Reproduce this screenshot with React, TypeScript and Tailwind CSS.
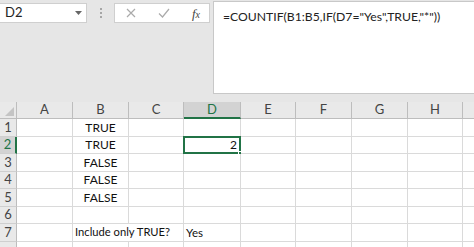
import React from 'react';

const cols = ['A', 'B', 'C', 'D', 'E', 'F', 'G', 'H', ''];
const rowHeights = ['h-[18px]', 'h-[17px]', 'h-[18px]', 'h-[17px]', 'h-[18px]', 'h-[17px]', 'h-[18px]', 'h-[17px]'];

const cells: Record<string, { text: string; align: 'left' | 'center' | 'right'; size: string }> = {
  'B1': { text: 'TRUE', align: 'center', size: 'text-[12px]' },
  'B2': { text: 'TRUE', align: 'center', size: 'text-[12px]' },
  'B3': { text: 'FALSE', align: 'center', size: 'text-[12px]' },
  'B4': { text: 'FALSE', align: 'center', size: 'text-[12px]' },
  'B5': { text: 'FALSE', align: 'center', size: 'text-[12px]' },
  'B7': { text: 'Include only TRUE?', align: 'left', size: 'text-[11.2px]' },
  'D2': { text: '2', align: 'right', size: 'text-[12px]' },
  'D7': { text: 'Yes', align: 'left', size: 'text-[11.5px]' },
};

function Cell({ id, row }: { id: string; row: number }) {
  const c = cells[id];
  const selected = id === 'D2';
  // text in B7 runs over into C7, so no line there
  const noRight = id === 'B7';
  return (
    <div
      className={`relative border-b border-[#dadada] ${rowHeights[row - 1]} bg-white ${
        noRight ? 'z-10' : 'border-r'
      }`}
    >
      {c && (
        <span
          className={`absolute top-0 bottom-0 flex items-center whitespace-nowrap ${c.size} text-[#111] ${
            c.align === 'center' ? 'left-0 right-0 justify-center' : c.align === 'right' ? 'right-[3px]' : 'left-[2px]'
          }`}
        >
          {c.text}
        </span>
      )}
      {selected && (
        <div className="absolute -left-px -top-px -right-px -bottom-px border-2 border-[#217346]">
          <div className="absolute -right-[4px] -bottom-[4px] w-[5px] h-[5px] bg-[#217346] border border-white" />
        </div>
      )}
    </div>
  );
}

export default function App() {
  return (
    <div className="w-[474px] h-[247px] overflow-hidden bg-[#e6e6e6] font-['Lato',sans-serif]">
      <div className="flex h-[102px]">
        <div className="w-[213px] flex items-start pt-[3px] gap-0">
          <div className="w-[87px] h-[20px] bg-white border border-[#cfcfcf] border-l-0 flex items-center justify-between pl-[5px] pr-[4px]">
            <span className="text-[13px] text-[#222]">D2</span>
            <svg width="7" height="4" viewBox="0 0 7 4"><path d="M0 0h7L3.5 4z" fill="#666" /></svg>
          </div>
          <div className="w-[27px] h-[20px] flex flex-col items-center justify-center gap-[2px]">
            <span className="w-[2px] h-[2px] bg-[#a6a6a6]" />
            <span className="w-[2px] h-[2px] bg-[#a6a6a6]" />
            <span className="w-[2px] h-[2px] bg-[#a6a6a6]" />
          </div>
          <div className="w-[96px] h-[20px] bg-white border border-[#cfcfcf] flex items-center pl-[11px] pr-[9px] justify-between">
            <svg width="10" height="10" viewBox="0 0 10 10"><path d="M1 1l8 8M9 1l-8 8" stroke="#aaa" strokeWidth="1.2" /></svg>
            <svg width="12" height="10" viewBox="0 0 12 10"><path d="M1 5.5l3.5 3.5L11 1" stroke="#aaa" strokeWidth="1.2" fill="none" /></svg>
            <span className="font-['Liberation_Serif',serif] italic text-[13px] text-[#444] leading-none">
              f<span className="text-[10px]">x</span>
            </span>
          </div>
        </div>
        <div className="flex-1 h-[93px] mt-[1px] bg-white border-t border-l border-b border-[#c8c8c8] pl-[9px] pt-[5px] leading-[16px]">
          <span className="text-[12.2px] text-[#222] whitespace-nowrap">=COUNTIF(B1:B5,IF(D7="Yes",TRUE,"*"))</span>
        </div>
      </div>

      <div className="grid grid-cols-[17px_56px_56px_55px_57px_55px_56px_56px_55px_20px]">
        <div className="h-[17px] bg-[#e9e9e9] border-r border-b border-[#bdbdbd] relative">
          <svg className="absolute right-[2px] bottom-[2px]" width="9" height="9" viewBox="0 0 9 9"><path d="M9 0v9H0z" fill="#c4c4c4" /></svg>
        </div>
        {cols.map((c) => (
          <div
            key={c || 'I'}
            className={`h-[17px] flex items-center justify-center text-[13px] border-r ${
              c === 'D'
                ? 'bg-[#d3d3d3] text-[#217346] border-b-2 border-b-[#217346] border-r-[#bdbdbd]'
                : 'bg-[#e9e9e9] text-[#444] border-b border-[#bdbdbd]'
            }`}
          >
            {c}
          </div>
        ))}
        {[1, 2, 3, 4, 5, 6, 7, 8].map((r) => (
          <React.Fragment key={r}>
            <div
              className={`${rowHeights[r - 1]} flex items-center justify-center text-[13px] border-b border-[#cfcfcf] ${
                r === 2
                  ? 'bg-[#d3d3d3] text-[#217346] border-r-2 border-r-[#217346]'
                  : 'bg-[#e9e9e9] text-[#444] border-r border-r-[#bdbdbd]'
              }`}
            >
              {r === 8 ? '' : r}
            </div>
            {cols.map((c) => (
              <Cell key={c + r} id={c + r} row={r} />
            ))}
          </React.Fragment>
        ))}
      </div>
    </div>
  );
}
